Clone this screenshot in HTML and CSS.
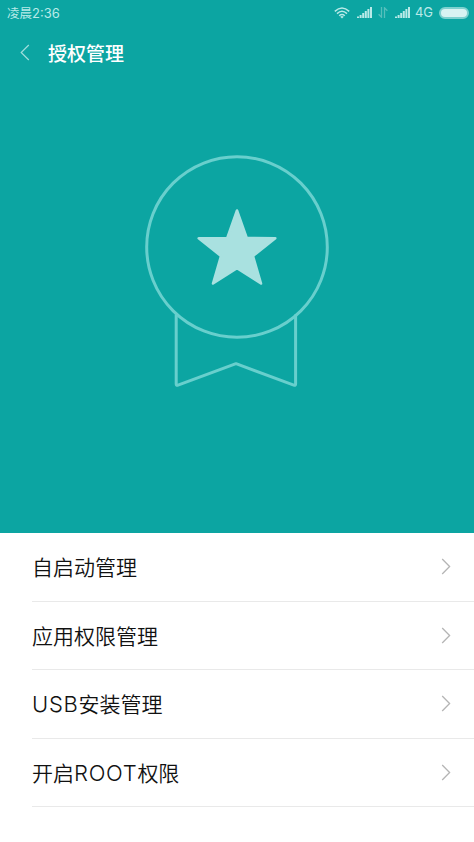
FILE: index.html
```html
<!DOCTYPE html>
<html lang="zh-CN">
<head>
<meta charset="utf-8">
<title>授权管理</title>
<link rel="stylesheet" href="styles.css">
</head>
<body>
<section class="hero">
  <div class="status">
    <span class="time">凌晨<span class="digits">2:36</span></span>
    <svg class="wifi" width="16" height="12" viewBox="0 0 16 12"><g fill="none" stroke="currentColor" stroke-width="1.5"><path d="M.8 4.4Q8-2.4 15.2 4.4"/><path d="M3 6.6Q8 1.9 13 6.6"/><path d="M5.2 8.7Q8 6.2 10.8 8.7"/></g><path d="M6.2 9.7Q8 8.3 9.8 9.7L8 11.6z" fill="currentColor"/></svg>
    <svg class="signal" width="15" height="11" viewBox="0 0 15 11"><path d="M0 9.5h2V11H0zM2.6 8h2v3h-2zM5.2 6h2v5h-2zM7.8 4h2v7h-2zM10.4 2h2v9h-2zM13 0h2v11h-2z" fill="currentColor"/></svg>
    <svg class="data" width="10" height="11" viewBox="0 0 10 11"><path d="M3.5 0v10.2L.6 7.3M6.5 11V.8l2.900 2.900" fill="none" stroke="currentColor" stroke-width="1.3"/></svg>
    <svg class="signal second" width="15" height="11" viewBox="0 0 15 11"><path d="M0 9.5h2V11H0zM2.6 8h2v3h-2zM5.2 6h2v5h-2zM7.8 4h2v7h-2zM10.4 2h2v9h-2zM13 0h2v11h-2z" fill="currentColor"/></svg>
    <span class="network">4G</span>
    <span class="battery"></span>
  </div>
  <header class="header">
    <svg class="back" width="10" height="17" viewBox="0 0 10 17"><path d="M8.8 1L1.2 8.5l7.6 7.5" fill="none" stroke="currentColor" stroke-width="1.2"/></svg>
    <h1 class="title">授权管理</h1>
  </header>
  <svg class="medal" width="194" height="240" viewBox="140 150 194 240">
    <g fill="none" stroke="#68cfcd" stroke-width="3" stroke-linejoin="round">
      <circle cx="237" cy="247" r="90.3"/>
      <path d="M176.2 314.5v69.5q0 1.8 1.8 1.1l58-21.4 57.8 21.4q1.8.7 1.8-1.1v-69.5"/>
    </g>
    <path d="M237 210.5l9.7 27.5 28.6.3-22.3 17.7 8 27.5-24-15.3-24 15.3 8-27.5-22.3-17.7 28.6-.3z" fill="#a9e1e0" stroke="#a9e1e0" stroke-width="2.6" stroke-linejoin="round"/>
  </svg>
</section>
<ul class="list">
  <li class="row"><span>自启动管理</span><svg class="arrow" width="10" height="17" viewBox="0 0 10 17"><path d="M1.2 1l7.4 7.5L1.2 16"/></svg></li>
  <li class="row"><span>应用权限管理</span><svg class="arrow" width="10" height="17" viewBox="0 0 10 17"><path d="M1.2 1l7.4 7.5L1.2 16"/></svg></li>
  <li class="row"><span><span class="latin">USB</span>安装管理</span><svg class="arrow" width="10" height="17" viewBox="0 0 10 17"><path d="M1.2 1l7.4 7.5L1.2 16"/></svg></li>
  <li class="row"><span>开启<span class="latin">ROOT</span>权限</span><svg class="arrow" width="10" height="17" viewBox="0 0 10 17"><path d="M1.2 1l7.4 7.5L1.2 16"/></svg></li>
</ul>
</body>
</html>
```
FILE: styles.css
```css
* { box-sizing: border-box; }
body {
  margin: 0;
  background: #fff;
  font-family: "Noto Sans CJK SC", sans-serif;
}
.hero {
  height: 533px;
  background: #0ca5a2;
  color: #fff;
}
.status {
  display: flex;
  align-items: center;
  height: 25px;
  padding: 0 5px 0 7px;
  color: #b9eae8;
}
.time {
  margin-right: auto;
  font-size: 12.5px;
  line-height: 25px;
}
.digits {
  font-family: Inter, sans-serif;
  font-size: 13px;
}
.signal { margin-left: 7px; }
.data { margin-left: 6px; color: #57bfbc; }
.second { margin-left: 7px; }
.network {
  margin-left: 5px;
  font: 13px/25px Inter, sans-serif;
}
.battery {
  width: 30px;
  height: 12px;
  margin-left: 6px;
  border: 2px solid #7ed1cf;
  border-radius: 6px;
  background: #d8f3f2;
}
.header {
  display: flex;
  align-items: center;
  height: 54px;
  padding-left: 20px;
}
.back { color: #a0dedc; }
.title {
  margin: 1px 0 0 18px;
  font-size: 19px;
  font-weight: 500;
  line-height: 54px;
}
.medal {
  display: block;
  margin: 71px auto 0;
}
.list {
  margin: 0;
  padding: 0 0 0 32px;
  list-style: none;
}
.row {
  display: flex;
  align-items: center;
  justify-content: space-between;
  height: 68.5px;
  padding-right: 23px;
  border-bottom: 1px solid #e9e9e9;
  color: #111;
  font-size: 21px;
  font-weight: 350;
}
.row > span { margin-top: -1px; }
.latin {
  font-family: Inter, sans-serif;
  font-size: 22px;
  line-height: 1;
  letter-spacing: 0.7px;
}
.arrow {
  fill: none;
  stroke: #b5b5b5;
  stroke-width: 1.3;
}
```
